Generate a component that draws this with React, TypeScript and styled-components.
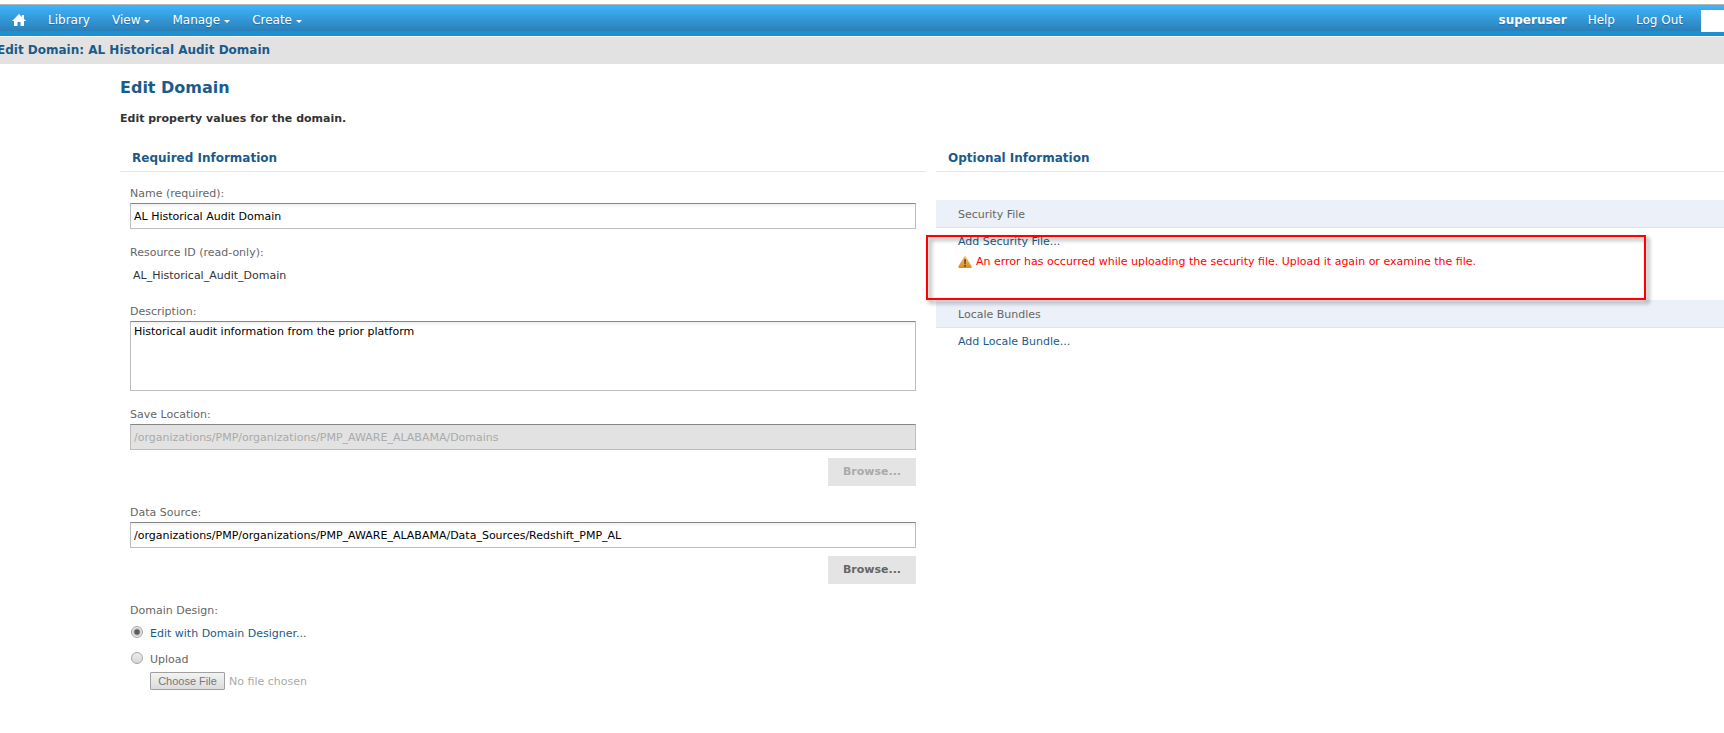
import React from "react";
import styled, { createGlobalStyle } from "styled-components";

const GlobalStyle = createGlobalStyle`
  * { box-sizing: border-box; }
  body {
    margin: 0;
    background: #fff;
    color: #333;
    font: 11px/14px "DejaVu Sans", Verdana, sans-serif;
    overflow-x: hidden;
  }
`;

const Banner = styled.header`
  display: flex;
  align-items: center;
  justify-content: space-between;
  height: 32px;
  margin-top: 4px;
  padding: 0 0 2px 12px;
  border-top: 1px solid #b0b5b8;
  background: linear-gradient(#3fb4fb 0, #2a80b9 26px, #1d90d2 26px);
`;

const Nav = styled.nav`
  display: flex;
  align-items: center;
  gap: 22px;
`;

const Session = styled.div`
  display: flex;
  align-items: center;
  gap: 21px;
`;

const NavLink = styled.a<{ $bold?: boolean }>`
  color: #fff;
  font-size: 12px;
  line-height: 16px;
  font-weight: ${(p) => (p.$bold ? 700 : 400)};
  text-decoration: none;
  text-shadow: 0 1px 1px rgba(0, 50, 100, 0.35);
`;

const HomeLink = styled(NavLink)`
  display: flex;
`;

const MenuButton = styled.button`
  display: flex;
  align-items: center;
  gap: 4px;
  padding: 0;
  border: 0;
  background: none;
  color: #fff;
  font: 12px/16px "DejaVu Sans", Verdana, sans-serif;
  text-shadow: 0 1px 1px rgba(0, 50, 100, 0.35);
`;

const Caret = styled.span`
  margin-top: 4px;
  border: 3px solid transparent;
  border-top-color: #fff;
  border-bottom: 0;
`;

const SearchInput = styled.input`
  width: 23px;
  height: 22px;
  margin: 3px 0 0 -3px;
  padding: 0 4px;
  border: 0;
  background: #fff;
`;

const TitleBar = styled.div`
  height: 27px;
  margin-top: 1px;
  background: #e2e2e2;
  color: #1b5b8b;
  font-size: 12px;
  font-weight: 700;
  line-height: 26px;
  text-indent: -3px;
`;

const Main = styled.main`
  padding: 14px 0 32px 120px;
`;

const Heading = styled.h1`
  margin: 0;
  color: #1b5b8b;
  font-size: 16px;
  line-height: 20px;
`;

const Intro = styled.p`
  margin: 14px 0 0;
  font-weight: 700;
`;

const Columns = styled.div`
  display: grid;
  grid-template-columns: minmax(0, 806fr) minmax(0, 788fr);
  gap: 10px;
  margin-top: 21px;
`;

const ColumnTitle = styled.h2`
  margin: 0;
  padding: 2px 12px 5px;
  height: 25px;
  border-bottom: 1px solid #e3e6ee;
  color: #1b5b8b;
  font-size: 12px;
  line-height: 18px;
`;

const Form = styled.form`
  display: flex;
  flex-direction: column;
  gap: 16px;
  padding: 14px 10px 0;
`;

const Field = styled.div`
  display: flex;
  flex-direction: column;
`;

const Label = styled.label`
  margin-bottom: 1px;
  color: #666;
  line-height: 16px;
`;

const control = `
  display: block;
  width: 100%;
  margin: 0;
  border: 1px solid #bdbdbd;
  border-top-color: #868686;
  border-radius: 0;
  color: #000;
  font: 11px/14px "DejaVu Sans", Verdana, sans-serif;
  background: linear-gradient(#f0f0f0, #fff 4px);
`;

const TextInput = styled.input`
  ${control}
  height: 26px;
  padding: 0 3px;
  &:disabled {
    background: #e2e2e2;
    color: #aaa;
  }
`;

const TextArea = styled.textarea`
  ${control}
  height: 70px;
  padding: 3px;
  resize: none;
`;

const ReadOnly = styled.output`
  padding: 7px 3px 5px;
`;

const BrowseButton = styled.button`
  align-self: flex-end;
  width: 88px;
  height: 28px;
  margin: 8px 0 3px;
  padding: 0;
  border: 0;
  background: #e4e4e4;
  color: #666;
  font: 700 11px/14px "DejaVu Sans", Verdana, sans-serif;
  &:disabled {
    color: #aaa;
  }
`;

const DesignSet = styled.fieldset`
  margin: 0;
  padding: 0;
  border: 0;
  min-width: 0;
`;

const Legend = styled.legend`
  padding: 0;
  color: #666;
  line-height: 16px;
`;

const Choice = styled.div`
  display: flex;
  align-items: center;
  gap: 7px;
  height: 18px;
  margin: 6px 0 8px;
  color: #666;
`;

const Radio = styled.input`
  appearance: none;
  width: 12px;
  height: 12px;
  margin: 0 0 4px 1px;
  border: 1px solid #a5a5a5;
  border-radius: 50%;
  background: linear-gradient(#ececec, #d8d8d8);
  &:checked {
    background: radial-gradient(circle, #5c5c5c 0 2px, #e6e6e6 4px);
  }
`;

const TextLink = styled.a`
  color: #1b5b8b;
  text-decoration: none;
`;

const FileInput = styled.input`
  display: block;
  width: 260px;
  height: 18px;
  margin: -5px 0 0 20px;
  color: #aaa;
  font: 11px/18px "DejaVu Sans", Verdana, sans-serif;
  &::file-selector-button {
    width: 75px;
    height: 18px;
    margin: 0 4px 0 0;
    padding: 0;
    border: 1px solid #a0a0a0;
    border-radius: 1px;
    background: linear-gradient(#f3f3f3, #dcdcdc);
    color: #777;
    font: 11px/14px "Liberation Sans", Arial, sans-serif;
  }
`;

const Resource = styled.section`
  position: relative;
  min-height: 100px;
`;

const Resources = styled.div`
  padding-top: 28px;
`;

const ResourceTitle = styled.h3`
  margin: 0 0 7px;
  padding: 8px 22px 5px;
  height: 28px;
  border-bottom: 1px solid #e0e5ec;
  background: #ebf0f9;
  color: #666;
  font-size: 11px;
  font-weight: 400;
  line-height: 14px;
`;

const ResourceBody = styled.div`
  display: flex;
  flex-direction: column;
  align-items: flex-start;
  gap: 6px;
  padding: 0 22px;
`;

const ErrorMessage = styled.div`
  display: flex;
  align-items: center;
  gap: 4px;
  color: #f00;
`;

const Highlight = styled.div`
  position: absolute;
  z-index: 1;
  top: 35px;
  left: -10px;
  width: 720px;
  height: 65px;
  border: 2px solid #f00;
  filter: drop-shadow(3px 3px 2px rgba(0, 0, 0, 0.45));
  pointer-events: none;
`;

const HomeIcon = () => (
  <svg width="14" height="12" viewBox="0 0 14 12" fill="#fff" aria-hidden="true">
    <path d="M7 0 10 3V1h2v4L14 7h-2v5H8.500V8h-3v4H2V7H0Z" />
  </svg>
);

const WarningIcon = () => (
  <svg width="14" height="12" viewBox="0 0 14 12" aria-hidden="true">
    <defs>
      <linearGradient id="amber" x1="0" y1="0" x2="0" y2="1">
        <stop offset="0" stopColor="#f6c571" />
        <stop offset="1" stopColor="#dc8a1f" />
      </linearGradient>
    </defs>
    <path
      d="M6.200.6Q7-.5 7.800.6L13.700 10.600Q14 12 12.800 12H1.200Q0 12 .3 10.600Z"
      fill="url(#amber)"
    />
    <path d="M6.100 3.300h1.900L7.700 8.200H6.400ZM6.200 9h1.700v1.700H6.200Z" fill="#554a3c" />
  </svg>
);

const menus = ["View", "Manage", "Create"];

export default function App() {
  return (
    <>
      <GlobalStyle />
      <Banner>
        <Nav aria-label="Main">
          <HomeLink href="#home" aria-label="Home">
            <HomeIcon />
          </HomeLink>
          <NavLink href="#library">Library</NavLink>
          {menus.map((name) => (
            <MenuButton key={name} type="button" aria-haspopup="menu">
              {name}
              <Caret />
            </MenuButton>
          ))}
        </Nav>
        <Session>
          <NavLink href="#account" $bold>
            superuser
          </NavLink>
          <NavLink href="#help">Help</NavLink>
          <NavLink href="#logout">Log Out</NavLink>
          <SearchInput type="text" aria-label="Search" />
        </Session>
      </Banner>
      <TitleBar>Edit Domain: AL Historical Audit Domain</TitleBar>
      <Main>
        <Heading>Edit Domain</Heading>
        <Intro>Edit property values for the domain.</Intro>
        <Columns>
          <section>
            <ColumnTitle>Required Information</ColumnTitle>
            <Form>
              <Field>
                <Label htmlFor="name">Name (required):</Label>
                <TextInput id="name" defaultValue="AL Historical Audit Domain" />
              </Field>
              <Field>
                <Label htmlFor="resource">Resource ID (read-only):</Label>
                <ReadOnly id="resource">AL_Historical_Audit_Domain</ReadOnly>
              </Field>
              <Field>
                <Label htmlFor="description">Description:</Label>
                <TextArea
                  id="description"
                  defaultValue="Historical audit information from the prior platform"
                />
              </Field>
              <Field>
                <Label htmlFor="location">Save Location:</Label>
                <TextInput
                  id="location"
                  disabled
                  defaultValue="/organizations/PMP/organizations/PMP_AWARE_ALABAMA/Domains"
                />
                <BrowseButton type="button" disabled>
                  Browse...
                </BrowseButton>
              </Field>
              <Field>
                <Label htmlFor="source">Data Source:</Label>
                <TextInput
                  id="source"
                  defaultValue="/organizations/PMP/organizations/PMP_AWARE_ALABAMA/Data_Sources/Redshift_PMP_AL"
                />
                <BrowseButton type="button">Browse...</BrowseButton>
              </Field>
              <DesignSet>
                <Legend>Domain Design:</Legend>
                <Choice>
                  <Radio
                    type="radio"
                    name="design"
                    defaultChecked
                    aria-labelledby="designer"
                  />
                  <TextLink id="designer" href="#designer">
                    Edit with Domain Designer...
                  </TextLink>
                </Choice>
                <Choice>
                  <Radio type="radio" name="design" id="upload" />
                  <label htmlFor="upload">Upload</label>
                </Choice>
                <FileInput type="file" aria-label="Domain design file" />
              </DesignSet>
            </Form>
          </section>
          <section>
            <ColumnTitle>Optional Information</ColumnTitle>
            <Resources>
              <Resource>
                <ResourceTitle>Security File</ResourceTitle>
                <ResourceBody>
                  <TextLink href="#security">Add Security File...</TextLink>
                  <ErrorMessage role="alert">
                    <WarningIcon />
                    An error has occurred while uploading the security file. Upload it
                    again or examine the file.
                  </ErrorMessage>
                </ResourceBody>
                <Highlight />
              </Resource>
              <Resource>
                <ResourceTitle>Locale Bundles</ResourceTitle>
                <ResourceBody>
                  <TextLink href="#locale">Add Locale Bundle...</TextLink>
                </ResourceBody>
              </Resource>
            </Resources>
          </section>
        </Columns>
      </Main>
    </>
  );
}
